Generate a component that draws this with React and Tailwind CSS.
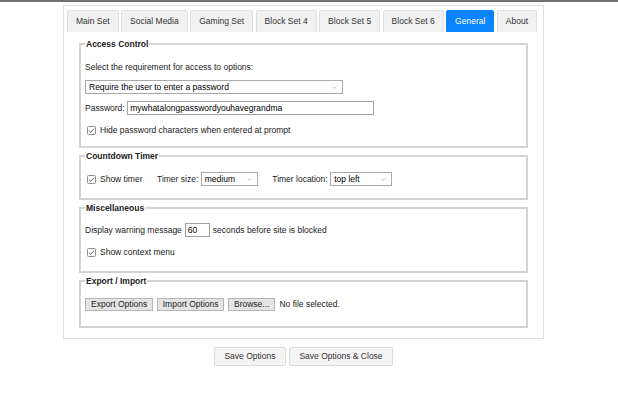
import React from "react";

const tabs = [
  "Main Set",
  "Social Media",
  "Gaming Set",
  "Block Set 4",
  "Block Set 5",
  "Block Set 6",
  "General",
  "About",
];

const CheckBox = () => (
  <span className="w-[9px] h-[9px] border border-[#8f8f8f] rounded-[1.5px] bg-white flex items-center justify-center shrink-0">
    <svg viewBox="0 0 10 10" className="w-[7px] h-[7px]">
      <path d="M1.5 5.2 L4 7.6 L8.6 2.4" fill="none" stroke="#555" strokeWidth="1.3" />
    </svg>
  </span>
);

const Select = ({ className, value }) => (
  <div
    className={`h-[14px] border border-[#a9a9a9] bg-white flex items-center justify-between pl-[3px] pr-[5px] ${className}`}
  >
    <span className="text-black whitespace-nowrap">{value}</span>
    <svg viewBox="0 0 8 5" className="w-[5px] h-[3px]">
      <path d="M1 1 L4 4 L7 1" fill="none" stroke="#888" strokeWidth="1" />
    </svg>
  </div>
);

const Group = ({ title, children, className }) => (
  <fieldset className={`border-2 border-[#d4d4d4] pl-[4px] pr-[4px] ${className}`}>
    <legend className="ml-0 px-[1px] font-bold leading-[10px] text-[#222]">{title}</legend>
    {children}
  </fieldset>
);

const GrayButton = ({ children }) => (
  <button className="h-[13px] px-[5px] leading-none whitespace-nowrap bg-[#e4e4e4] border border-[#b5b5b5] text-[#222]">
    {children}
  </button>
);

export default function App() {
  return (
    <div className="min-h-screen bg-white font-['Liberation_Sans',Arial,sans-serif] text-[8.5px] text-[#222]">
      <div className="h-[2px] bg-[#727272]" />

      <div className="ml-[63px] w-[481px] mt-[3px] border border-[#e0e0e0]">
        {/* Tabs */}
        <div className="flex gap-[2.5px] pl-[3px] pt-[4px]">
          {tabs.map((t) =>
            t === "General" ? (
              <div
                key={t}
                className="h-[22px] px-[8px] shrink-0 whitespace-nowrap flex items-center border border-[#0a84ff] bg-[#0a84ff] text-white rounded-t-[2px]"
              >
                {t}
              </div>
            ) : (
              <div
                key={t}
                className="h-[22px] px-[8px] shrink-0 whitespace-nowrap flex items-center border border-b-0 border-[#dedede] bg-[#f1f1f1] text-[#333] rounded-t-[2px]"
              >
                {t}
              </div>
            )
          )}
        </div>

        {/* Content */}
        <div className="px-[15px] pt-[7px] pb-[10px] flex flex-col gap-[3px]">
          <Group title="Access Control" className="pb-[11px]">
            <div className="mt-[13px] leading-[10px]">Select the requirement for access to options:</div>
            <Select className="w-[258px] mt-[8px]" value="Require the user to enter a password" />
            <div className="mt-[7px] flex items-center gap-[2.5px]">
              <span>Password:</span>
              <div className="w-[247px] h-[14px] border border-[#a0a0a0] bg-white pl-[2px] flex items-center text-black">
                mywhatalongpasswordyouhavegrandma
              </div>
            </div>
            <div className="mt-[10px] pl-[2px] flex items-center gap-[4px] leading-[10px]">
              <CheckBox />
              <span>Hide password characters when entered at prompt</span>
            </div>
          </Group>

          <Group title="Countdown Timer" className="pb-[12px]">
            <div className="mt-[11px] pl-[2px] flex items-center h-[14px]">
              <CheckBox />
              <span className="ml-[4px]">Show timer</span>
              <span className="ml-[14.5px]">Timer size:</span>
              <Select className="w-[57px] ml-[2.5px]" value="medium" />
              <span className="ml-[14.5px]">Timer location:</span>
              <Select className="w-[62px] ml-[2.5px]" value="top left" />
            </div>
          </Group>

          <Group title="Miscellaneous" className="pb-[14px]">
            <div className="mt-[10px] flex items-center h-[14px]">
              <span>Display warning message</span>
              <div className="w-[25px] h-[14px] ml-[3px] border border-[#a0a0a0] bg-white pl-[2px] flex items-center text-black">
                60
              </div>
              <span className="ml-[3px]">seconds before site is blocked</span>
            </div>
            <div className="mt-[10px] pl-[2px] flex items-center gap-[4px] leading-[10px]">
              <CheckBox />
              <span>Show context menu</span>
            </div>
          </Group>

          <Group title="Export / Import" className="pb-[15px]">
            <div className="mt-[12px] flex items-center gap-[3.5px]">
              <GrayButton>Export Options</GrayButton>
              <GrayButton>Import Options</GrayButton>
              <GrayButton>Browse...</GrayButton>
              <span className="ml-[0.5px]">No file selected.</span>
            </div>
          </Group>
        </div>
      </div>

      {/* Bottom buttons */}
      <div className="ml-[63px] w-[481px] mt-[8px] flex justify-center gap-[3px]">
        <button className="h-[19px] px-[9.5px] bg-[#f4f4f4] border border-[#dadada] rounded-[2px] text-[#333]">
          Save Options
        </button>
        <button className="h-[19px] px-[9.5px] bg-[#f4f4f4] border border-[#dadada] rounded-[2px] text-[#333]">
          Save Options &amp; Close
        </button>
      </div>
    </div>
  );
}
